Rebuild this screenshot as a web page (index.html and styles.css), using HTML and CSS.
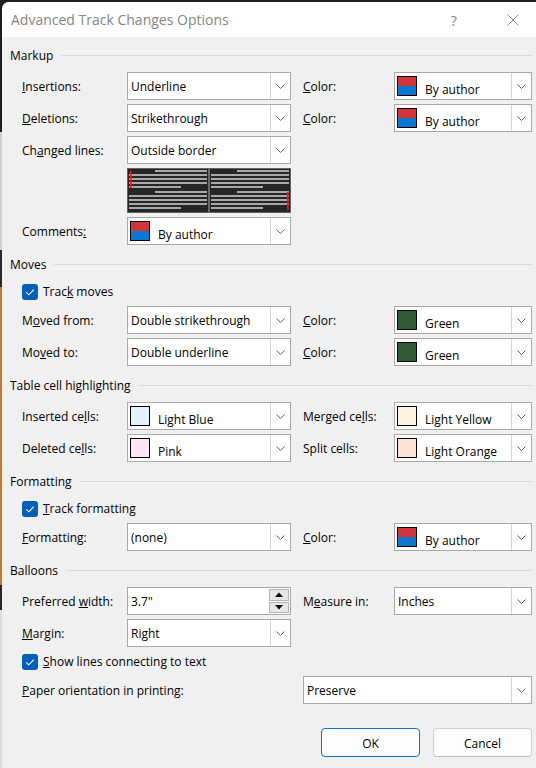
FILE: index.html
```html
<!DOCTYPE html>
<html>
<head>
<meta charset="utf-8">
<title>Advanced Track Changes Options</title>
<link rel="stylesheet" href="styles.css">
</head>
<body>
<div class="dialog">
  <div class="titlebar">
    <span class="title">Advanced Track Changes Options</span>
    <span class="help">?</span>
    <svg class="close" width="12" height="12" viewBox="0 0 12 12"><path d="M0.5 0.5 L11.5 11.5 M11.5 0.5 L0.5 11.5" stroke="#8a8a8a" stroke-width="1" fill="none"/></svg>
  </div>
  <div class="content">

    <div class="section first">
      <div class="hdr"><span>Markup</span></div>
      <div class="grid">
        <span class="lbl"><u>I</u>nsertions:</span>
        <div class="dd"><span class="val">Underline</span><span class="arr"><svg width="9" height="5" viewBox="0 0 9 5"><path d="M0.5 0.5 L4.5 4.5 L8.5 0.5" stroke="#666" fill="none"/></svg></span></div>
        <span class="lbl rl"><u>C</u>olor:</span>
        <div class="dd"><span class="sw author"></span><span class="val low">By author</span><span class="arr"><svg width="9" height="5" viewBox="0 0 9 5"><path d="M0.5 0.5 L4.5 4.5 L8.5 0.5" stroke="#666" fill="none"/></svg></span></div>

        <span class="lbl"><u>D</u>eletions:</span>
        <div class="dd"><span class="val">Strikethrough</span><span class="arr"><svg width="9" height="5" viewBox="0 0 9 5"><path d="M0.5 0.5 L4.5 4.5 L8.5 0.5" stroke="#666" fill="none"/></svg></span></div>
        <span class="lbl rl"><u>C</u>olor:</span>
        <div class="dd"><span class="sw author"></span><span class="val low">By author</span><span class="arr"><svg width="9" height="5" viewBox="0 0 9 5"><path d="M0.5 0.5 L4.5 4.5 L8.5 0.5" stroke="#666" fill="none"/></svg></span></div>

        <span class="lbl">Ch<u>a</u>nged lines:</span>
        <div class="dd"><span class="val">Outside border</span><span class="arr"><svg width="9" height="5" viewBox="0 0 9 5"><path d="M0.5 0.5 L4.5 4.5 L8.5 0.5" stroke="#666" fill="none"/></svg></span></div>

        <div class="preview">
          <svg width="164" height="45" viewBox="0 0 164 45">
            <rect x="0.5" y="0.5" width="163" height="44" fill="#262626" stroke="#626262"/>
            <rect x="81" y="1" width="2" height="43" fill="#6a6a6a"/>
            <g fill="#a8a8a8">
              <rect x="28" y="2" width="52" height="2"/>
              <rect x="2" y="6" width="78" height="2"/>
              <rect x="2" y="10" width="78" height="2"/>
              <rect x="2" y="14" width="78" height="2"/>
              <rect x="2" y="18" width="52" height="2"/>
              <rect x="28" y="23" width="52" height="2"/>
              <rect x="2" y="27" width="78" height="2"/>
              <rect x="2" y="31" width="78" height="2"/>
              <rect x="2" y="35" width="78" height="2"/>
              <rect x="2" y="39" width="52" height="2"/>

              <rect x="110" y="2" width="52" height="2"/>
              <rect x="84" y="6" width="78" height="2"/>
              <rect x="84" y="10" width="78" height="2"/>
              <rect x="84" y="14" width="78" height="2"/>
              <rect x="84" y="18" width="52" height="2"/>
              <rect x="110" y="23" width="52" height="2"/>
              <rect x="84" y="27" width="78" height="2"/>
              <rect x="84" y="31" width="78" height="2"/>
              <rect x="84" y="35" width="78" height="2"/>
              <rect x="84" y="39" width="52" height="2"/>
            </g>
            <rect x="3" y="3" width="1.6" height="17" fill="#ff1010"/>
            <rect x="160" y="24" width="1.6" height="18" fill="#ff1010"/>
          </svg>
        </div>

        <span class="lbl">Comments<u>:</u></span>
        <div class="dd"><span class="sw author"></span><span class="val low">By author</span><span class="arr"><svg width="9" height="5" viewBox="0 0 9 5"><path d="M0.5 0.5 L4.5 4.5 L8.5 0.5" stroke="#666" fill="none"/></svg></span></div>
      </div>
    </div>

    <div class="section">
      <div class="hdr"><span>Moves</span></div>
      <div class="grid">
        <div class="check"><span class="box"><svg width="16" height="16" viewBox="0 0 16 16"><path d="M4.2 8.3 L6.8 10.8 L11.8 5.6" stroke="#fff" stroke-width="1.1" fill="none"/></svg></span><span>Trac<u>k</u> moves</span></div>

        <span class="lbl">M<u>o</u>ved from:</span>
        <div class="dd"><span class="val">Double strikethrough</span><span class="arr"><svg width="9" height="5" viewBox="0 0 9 5"><path d="M0.5 0.5 L4.5 4.5 L8.5 0.5" stroke="#666" fill="none"/></svg></span></div>
        <span class="lbl rl"><u>C</u>olor:</span>
        <div class="dd"><span class="sw green"></span><span class="val low">Green</span><span class="arr"><svg width="9" height="5" viewBox="0 0 9 5"><path d="M0.5 0.5 L4.5 4.5 L8.5 0.5" stroke="#666" fill="none"/></svg></span></div>

        <span class="lbl">Mo<u>v</u>ed to:</span>
        <div class="dd"><span class="val">Double underline</span><span class="arr"><svg width="9" height="5" viewBox="0 0 9 5"><path d="M0.5 0.5 L4.5 4.5 L8.5 0.5" stroke="#666" fill="none"/></svg></span></div>
        <span class="lbl rl"><u>C</u>olor:</span>
        <div class="dd"><span class="sw green"></span><span class="val low">Green</span><span class="arr"><svg width="9" height="5" viewBox="0 0 9 5"><path d="M0.5 0.5 L4.5 4.5 L8.5 0.5" stroke="#666" fill="none"/></svg></span></div>
      </div>
    </div>

    <div class="section">
      <div class="hdr"><span>Table cell highlighting</span></div>
      <div class="grid">
        <span class="lbl">Inserted ce<u>l</u>ls:</span>
        <div class="dd"><span class="sw lblue"></span><span class="val low">Light Blue</span><span class="arr"><svg width="9" height="5" viewBox="0 0 9 5"><path d="M0.5 0.5 L4.5 4.5 L8.5 0.5" stroke="#666" fill="none"/></svg></span></div>
        <span class="lbl rl">Merged ce<u>l</u>ls:</span>
        <div class="dd"><span class="sw lyellow"></span><span class="val low">Light Yellow</span><span class="arr"><svg width="9" height="5" viewBox="0 0 9 5"><path d="M0.5 0.5 L4.5 4.5 L8.5 0.5" stroke="#666" fill="none"/></svg></span></div>

        <span class="lbl">Deleted ce<u>l</u>ls:</span>
        <div class="dd"><span class="sw pink"></span><span class="val low">Pink</span><span class="arr"><svg width="9" height="5" viewBox="0 0 9 5"><path d="M0.5 0.5 L4.5 4.5 L8.5 0.5" stroke="#666" fill="none"/></svg></span></div>
        <span class="lbl rl">Split cells:</span>
        <div class="dd"><span class="sw lorange"></span><span class="val low">Light Orange</span><span class="arr"><svg width="9" height="5" viewBox="0 0 9 5"><path d="M0.5 0.5 L4.5 4.5 L8.5 0.5" stroke="#666" fill="none"/></svg></span></div>
      </div>
    </div>

    <div class="section">
      <div class="hdr"><span>Formatting</span></div>
      <div class="grid">
        <div class="check"><span class="box"><svg width="16" height="16" viewBox="0 0 16 16"><path d="M4.2 8.3 L6.8 10.8 L11.8 5.6" stroke="#fff" stroke-width="1.1" fill="none"/></svg></span><span><u>T</u>rack formatting</span></div>

        <span class="lbl"><u>F</u>ormatting:</span>
        <div class="dd"><span class="val">(none)</span><span class="arr"><svg width="9" height="5" viewBox="0 0 9 5"><path d="M0.5 0.5 L4.5 4.5 L8.5 0.5" stroke="#666" fill="none"/></svg></span></div>
        <span class="lbl rl"><u>C</u>olor:</span>
        <div class="dd"><span class="sw author"></span><span class="val low">By author</span><span class="arr"><svg width="9" height="5" viewBox="0 0 9 5"><path d="M0.5 0.5 L4.5 4.5 L8.5 0.5" stroke="#666" fill="none"/></svg></span></div>
      </div>
    </div>

    <div class="section">
      <div class="hdr"><span>Balloons</span></div>
      <div class="grid">
        <span class="lbl">Preferred <u>w</u>idth:</span>
        <div class="dd spin"><span class="val">3.7"</span>
          <span class="spinbtns">
            <span class="sb"><svg width="8" height="5" viewBox="0 0 8 5"><path d="M0 5 L4 0.5 L8 5 Z" fill="#000"/></svg></span>
            <span class="sb"><svg width="8" height="5" viewBox="0 0 8 5"><path d="M0 0 L8 0 L4 4.5 Z" fill="#000"/></svg></span>
          </span>
        </div>
        <span class="lbl rl">M<u>e</u>asure in:</span>
        <div class="dd"><span class="val">Inches</span><span class="arr"><svg width="9" height="5" viewBox="0 0 9 5"><path d="M0.5 0.5 L4.5 4.5 L8.5 0.5" stroke="#666" fill="none"/></svg></span></div>

        <span class="lbl"><u>M</u>argin:</span>
        <div class="dd"><span class="val">Right</span><span class="arr"><svg width="9" height="5" viewBox="0 0 9 5"><path d="M0.5 0.5 L4.5 4.5 L8.5 0.5" stroke="#666" fill="none"/></svg></span></div>

        <div class="check"><span class="box"><svg width="16" height="16" viewBox="0 0 16 16"><path d="M4.2 8.3 L6.8 10.8 L11.8 5.6" stroke="#fff" stroke-width="1.1" fill="none"/></svg></span><span><u>S</u>how lines connecting to text</span></div>

        <span class="lbl wide"><u>P</u>aper orientation in printing:</span>
        <div class="dd paper"><span class="val">Preserve</span><span class="arr"><svg width="9" height="5" viewBox="0 0 9 5"><path d="M0.5 0.5 L4.5 4.5 L8.5 0.5" stroke="#666" fill="none"/></svg></span></div>
      </div>
    </div>

    <div class="buttons">
      <button class="btn default">OK</button>
      <button class="btn">Cancel</button>
    </div>
  </div>
</div>
</body>
</html>
```

FILE: styles.css
```css
html, body {
  margin: 0;
  padding: 0;
  height: 768px;
  overflow: hidden;
}
body {
  background: linear-gradient(to bottom,
    #1e1e1e 0, #1e1e1e 132px,
    #cfcfcf 132px, #cfcfcf 250px,
    #2a2a2a 250px, #2a2a2a 287px,
    #c6782a 287px, #c6782a 585px,
    #262626 585px, #262626 610px,
    #dcdcdc 610px);
  font-family: "Open Sans", "Noto Sans", sans-serif;
  font-size: 12px;
  color: #000;
}
.dialog {
  margin: 2px 0 0 2px;
  height: 766px;
  background: #f0f0f0;
  border-top-left-radius: 7px;
  overflow: hidden;
}
.titlebar {
  height: 35px;
  background: #fff;
  display: flex;
  align-items: center;
  padding-left: 9px;
}
.title {
  font-size: 14px;
  color: #858585;
  flex: 1;
}
.help {
  font-size: 15px;
  color: #8a8a8a;
  margin-right: 50px;
}
.close {
  margin-right: 17px;
}
.content {
  padding: 9px 4px 0 8px;
}
.section {
  margin-top: 10px;
}
.section.first {
  margin-top: 0;
}
.hdr {
  height: 18px;
  display: flex;
  align-items: center;
  line-height: 18px;
}
.hdr span {
  padding-top: 2px;
}
.hdr::after {
  content: "";
  flex: 1;
  height: 1px;
  background: #d9d9d9;
  margin-left: 8px;
}
.grid {
  margin: 8px 0 0 12px;
  display: grid;
  grid-template-columns: 105px 164px 103px 138px;
  row-gap: 4px;
}
.lbl {
  grid-column: 1;
  height: 28px;
  box-sizing: border-box;
  padding-top: 1px;
  line-height: 28px;
  white-space: nowrap;
}
.lbl.rl {
  grid-column: 3;
  padding-left: 12px;
}
.lbl.wide {
  grid-column: 1 / 3;
}
.dd {
  height: 28px;
  box-sizing: border-box;
  background: #fff;
  border: 1px solid #a8a8a8;
  display: flex;
  align-items: center;
  white-space: nowrap;
}
.dd.paper {
  grid-column: 3 / 5;
  margin-left: 12px;
}
.val {
  flex: 1;
  padding-left: 3px;
}
.val.low {
  padding-top: 6px;
  padding-left: 0;
}
.arr {
  width: 20px;
  align-self: stretch;
  box-sizing: border-box;
  border-left: 1px solid #d3d3d3;
  display: flex;
  align-items: center;
  justify-content: center;
}
.sw {
  width: 20px;
  height: 20px;
  box-sizing: border-box;
  border: 1px solid #000;
  margin: 0 8px 0 2px;
}
.sw.author { background: linear-gradient(to bottom, #d3343b 50%, #0a77d2 50%); }
.sw.green { background: #2e5d34; }
.sw.lblue { background: #e3f1fb; }
.sw.lyellow { background: #fff3e0; }
.sw.pink { background: #fde5f1; }
.sw.lorange { background: #fde2d2; }
.preview {
  grid-column: 2;
  height: 45px;
}
.preview svg {
  display: block;
}
.check {
  grid-column: 1 / 5;
  height: 21px;
  display: flex;
  align-items: center;
}
.check .box {
  width: 16px;
  height: 16px;
  border-radius: 3px;
  background: #005fb8;
  margin-right: 5px;
  display: flex;
}
.spin .spinbtns {
  width: 20px;
  align-self: stretch;
  display: flex;
  flex-direction: column;
  padding: 1px 1px 1px 0;
  gap: 1px;
}
.sb {
  flex: 1;
  background: #e6e6e6;
  border: 1px solid #b4b4b4;
  display: flex;
  align-items: center;
  justify-content: center;
}
.buttons {
  display: flex;
  justify-content: flex-end;
  gap: 13px;
  margin-top: 24px;
}
.btn {
  width: 99px;
  height: 29px;
  box-sizing: border-box;
  background: #fdfdfd;
  border: 1px solid #d0d0d0;
  border-bottom-color: #bdbdbd;
  border-radius: 4px;
  font-family: "Open Sans", "Noto Sans", sans-serif;
  font-size: 12px;
  color: #000;
  padding: 1px 0 0;
}
.btn.default {
  border-color: #1a6fc4;
}
```
